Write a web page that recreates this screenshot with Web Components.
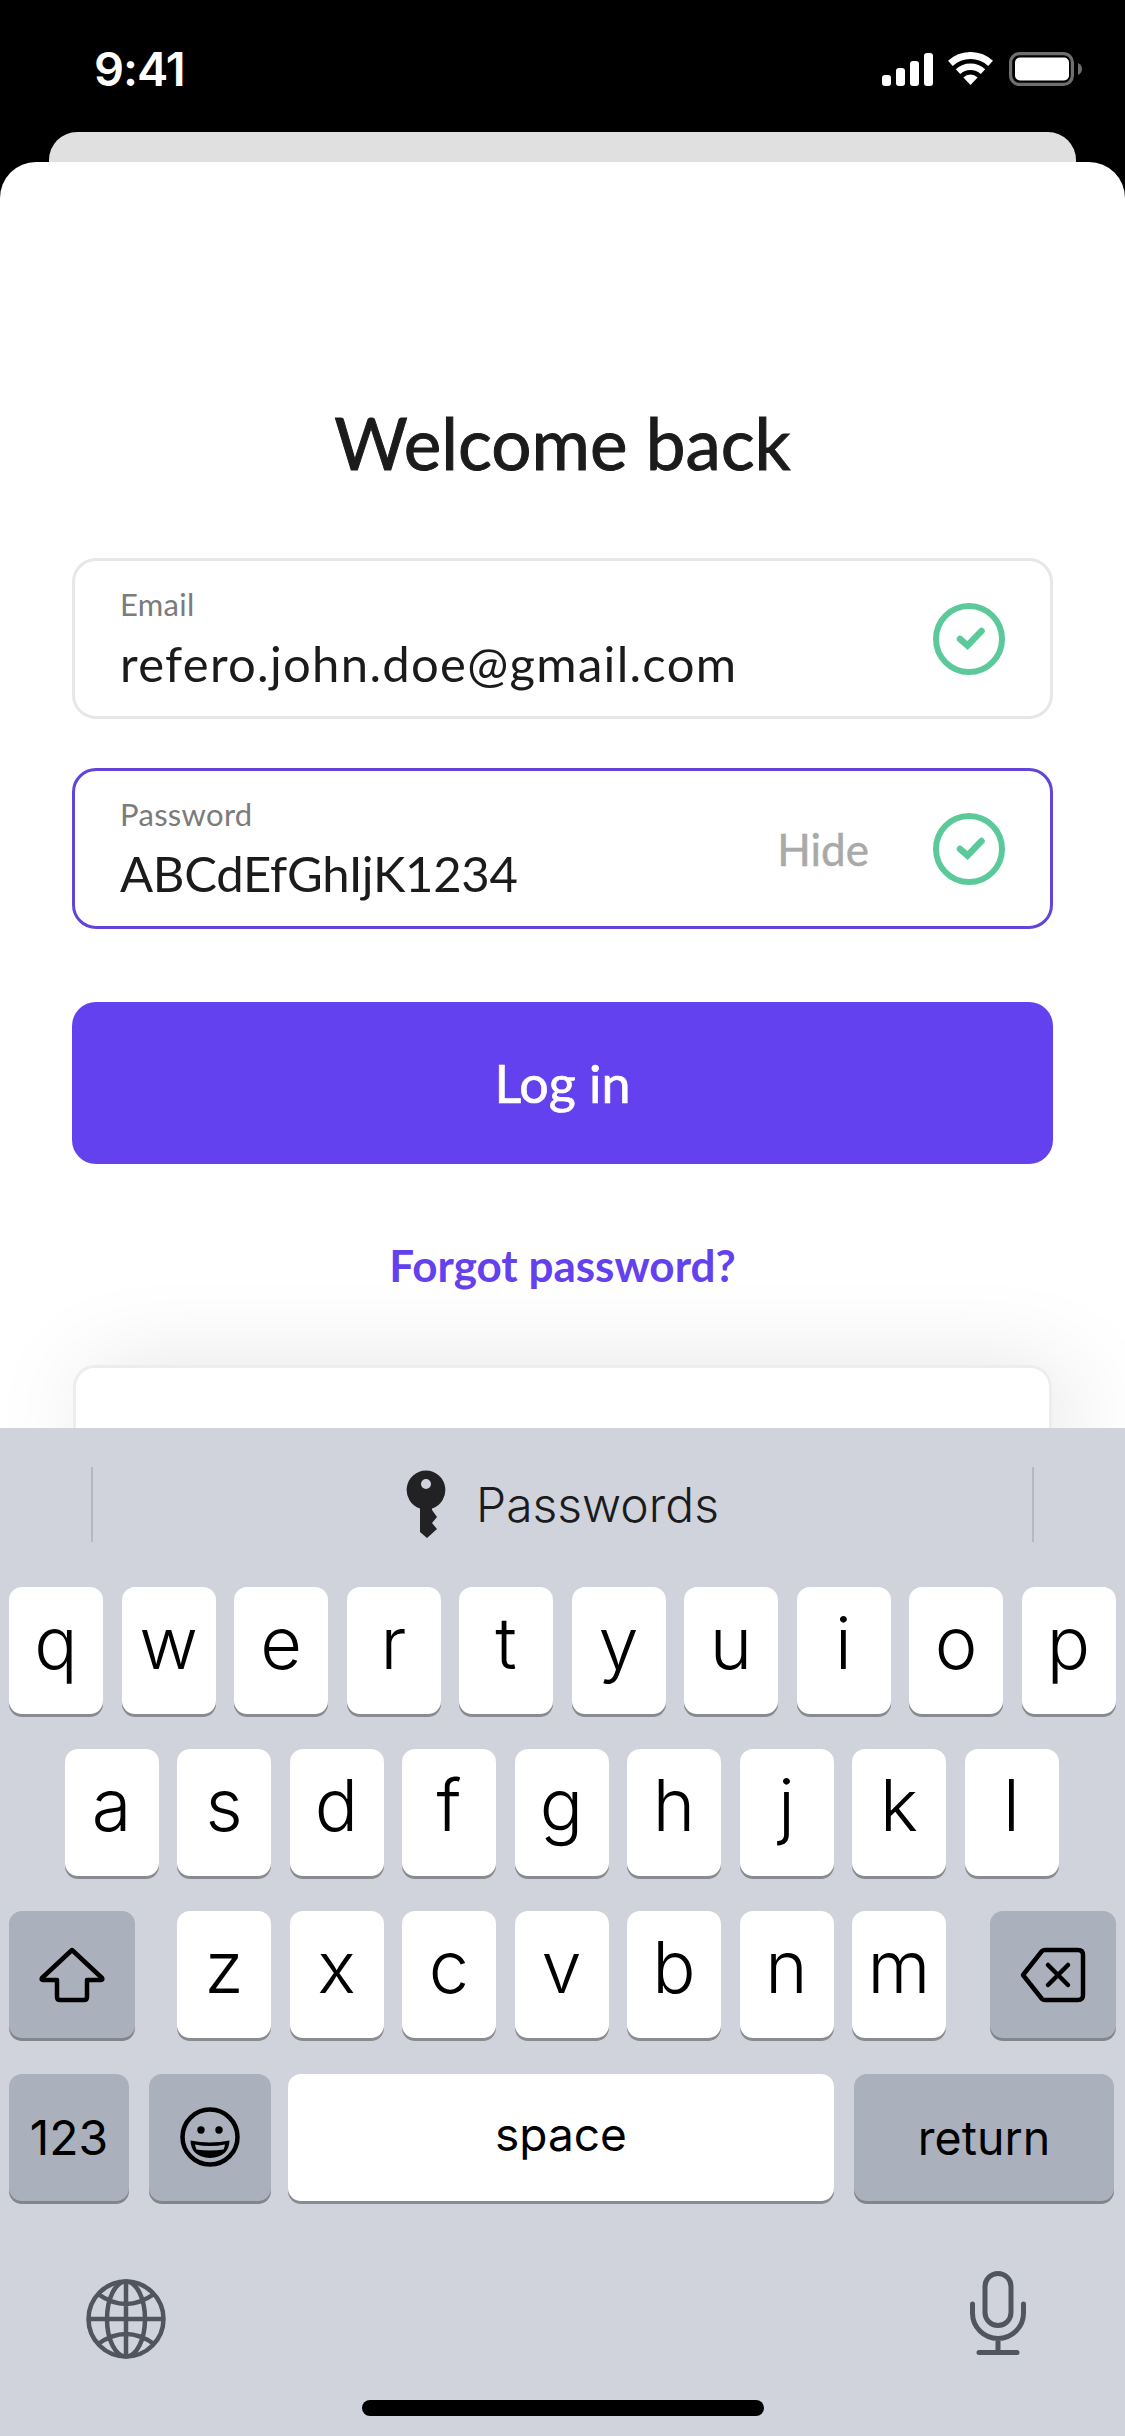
<!DOCTYPE html>
<html>
<head>
<meta charset="utf-8">
<style>
  html, body { margin: 0; padding: 0; background: #000; }
  body { width: 1125px; height: 2436px; overflow: hidden; font-family: Lato, "Noto Sans", sans-serif; }
</style>
</head>
<body>
<login-screen>
  <status-bar slot="status" time="9:41"></status-bar>
  <login-field label="Email" value="refero.john.doe@gmail.com" style="--value-spacing: 1.3px"></login-field>
  <login-field label="Password" value="ABCdEfGhIjK1234" active style="--value-spacing: -0.3px">
    <span slot="action">Hide</span>
  </login-field>
  <primary-button>Log in</primary-button>
  <soft-keyboard slot="keyboard"></soft-keyboard>
</login-screen>

<script>
class StatusBar extends HTMLElement {
  constructor() {
    super();
    this.attachShadow({ mode: 'open' });
    this.shadowRoot.innerHTML = /* html */ `
    <style>
      :host { display: flex; align-items: flex-start; justify-content: space-between; height: 132px; box-sizing: border-box; padding: 52px 43px 0 94px; background: #000; color: #fff; }
      .time { font: 600 47px/34px Inter, sans-serif; letter-spacing: -1px; }
      .icons { display: flex; align-items: flex-start; }
      svg { display: block; }
    </style>
    <div class="time"></div>
    <div class="icons">
      <svg width="51" height="33" viewBox="0 0 51 33" fill="#fff" style="margin:1px 15px 0 0">
        <rect x="0" y="22" width="9" height="11" rx="3"/>
        <rect x="14" y="15" width="9" height="18" rx="3"/>
        <rect x="28" y="8" width="9" height="25" rx="3"/>
        <rect x="42" y="0" width="9" height="33" rx="3"/>
      </svg>
      <svg width="45" height="33" viewBox="0 0 45 33" fill="none" stroke="#fff" stroke-width="7" style="margin-right:16px">
        <path d="M2.4 11.4A29.5 29.5 0 0 1 42.6 11.4"/>
        <path stroke-width="6.5" d="M10 19.6A18.3 18.3 0 0 1 35 19.6"/>
        <path d="M22.5 33L15.4 25.4A10.4 10.4 0 0 1 29.6 25.4Z" fill="#fff" stroke="none"/>
      </svg>
      <svg width="73" height="34" viewBox="0 0 73 34">
        <rect x="1.6" y="1.6" width="61.8" height="30.8" rx="9" fill="none" stroke="#6f6f6f" stroke-width="3.2"/>
        <rect x="6" y="5.5" width="54" height="23" rx="5" fill="#fff"/>
        <path d="M69 11Q73 13 73 17T69 23Z" fill="#6f6f6f"/>
      </svg>
    </div>`;
    this.shadowRoot.querySelector('.time').textContent = this.getAttribute('time');
  }
}

class LoginField extends HTMLElement {
  constructor() {
    super();
    this.attachShadow({ mode: 'open' });
    this.shadowRoot.innerHTML = /* html */ `
    <style>
      :host { display: flex; align-items: center; box-sizing: border-box; height: 161px; padding: 0 45px 0 45px; border: 3px solid #e7e7e7; border-radius: 24px; background: #fff; font-family: Lato, sans-serif; }
      :host([active]) { border-color: #6244d8; }
      .text { flex: 1; display: flex; flex-direction: column; gap: 13px; }
      .label { font-size: 31px; line-height: 36px; letter-spacing: 0.3px; color: #7b7b7b; }
      .value { font-size: 49px; line-height: 56px; color: #1b1b1b; letter-spacing: var(--value-spacing, 0); }
      ::slotted([slot="action"]) { font-size: 44px; color: #a9a9a9; margin-right: 64px; -webkit-text-stroke: 0.5px #a9a9a9; }
      svg { display: block; flex: none; }
    </style>
    <div class="text">
      <div class="label"></div>
      <div class="value"></div>
    </div>
    <slot name="action"></slot>
    <svg width="72" height="72" viewBox="0 0 72 72" fill="none" stroke="#5cc99b" stroke-width="6" stroke-linecap="round">
      <circle cx="36" cy="36" r="33"/>
      <path d="M27 36L34.5 42.5L48.5 28" stroke-width="6.5" stroke-linejoin="miter"/>
    </svg>`;
    this.shadowRoot.querySelector('.label').textContent = this.getAttribute('label');
    this.shadowRoot.querySelector('.value').textContent = this.getAttribute('value');
  }
}

class PrimaryButton extends HTMLElement {
  constructor() {
    super();
    this.attachShadow({ mode: 'open' });
    this.shadowRoot.innerHTML = /* html */ `
    <style>
      :host { display: flex; align-items: center; justify-content: center; height: 162px; border-radius: 24px; background: #6441ee; color: #fff; font: 400 52px Lato, sans-serif; -webkit-text-stroke: 0.7px #fff; }
    </style>
    <slot></slot>`;
  }
}

class KeyCap extends HTMLElement {
  constructor() {
    super();
    this.attachShadow({ mode: 'open' });
    this.shadowRoot.innerHTML = /* html */ `
    <style>
      :host { display: flex; align-items: center; justify-content: center; flex: none; box-sizing: border-box; width: 94px; height: 127px; padding-bottom: 16px; border-radius: 13px; background: #fff; box-shadow: 0 3px 0 #898b90; color: #000; font: 350 72px Inter, sans-serif; }
      :host([fn]) { background: #aab0bc; box-shadow: 0 3px 0 #82858c; }
      :host([small]) { font-size: 46.5px; font-weight: 400; padding-bottom: 0; }
      :host([icon]) { padding-bottom: 0; }
    </style>
    <slot></slot>`;
  }
}

class SoftKeyboard extends HTMLElement {
  constructor() {
    super();
    this.attachShadow({ mode: 'open' });
    const keys = (s) => s.split('').map((c) => `<key-cap>${c}</key-cap>`).join('');
    this.shadowRoot.innerHTML = /* html */ `
    <style>
      :host { display: block; height: 1008px; background: #d0d3db; position: relative; }
      .accessory { display: flex; align-items: center; justify-content: space-between; height: 159px; box-sizing: border-box; padding: 0 91px 6px; }
      .divider { width: 2px; height: 75px; background: #b4b8c1; }
      .passwords { display: flex; align-items: center; gap: 30px; font: 350 48px Inter, sans-serif; color: #1b1b1d; }
      .rows { display: flex; flex-direction: column; gap: 35px; padding: 0 9px; }
      .row { display: flex; gap: 18.5px; }
      .row.home { padding-left: 55.5px; }
      .row.third { justify-content: space-between; gap: 0; }
      .letters { display: flex; gap: 18.5px; margin-right: 2px; }
      .row.bottom { gap: 20px; margin-top: 1px; }
      .bottom-bar { display: flex; justify-content: space-between; align-items: flex-start; padding: 78px 99px 0 86px; }
      .home-bar { position: absolute; left: 362px; bottom: 20px; width: 402px; height: 16px; border-radius: 8px; background: #000; }
      svg { display: block; }
    </style>
    <div class="accessory">
      <div class="divider"></div>
      <div class="passwords">
        <svg width="40" height="70" viewBox="0 0 40 70" fill="#222224">
          <path fill-rule="evenodd" d="M20 .5A19.5 19.5 0 0 1 26 38.5V40L31 47L26 53L31 59L21 68L14 62V38.5A19.5 19.5 0 0 1 20 .5ZM20 9A5 5 0 1 0 20 19A5 5 0 1 0 20 9Z"/>
        </svg>
        <span>Passwords</span>
      </div>
      <div class="divider"></div>
    </div>
    <div class="rows">
      <div class="row">${keys('qwertyuiop')}</div>
      <div class="row home">${keys('asdfghjkl')}</div>
      <div class="row third">
        <key-cap fn icon style="width:126px">
          <svg width="66" height="56" viewBox="0 0 66 56" fill="none" stroke="#000" stroke-width="4.5" stroke-linejoin="round">
            <path d="M33 3L3 31Q2 33 4 33H18V50Q18 53 21 53H45Q48 53 48 50V33H62Q64 33 63 31Z"/>
          </svg>
        </key-cap>
        <div class="letters">${keys('zxcvbnm')}</div>
        <key-cap fn icon style="width:126px">
          <svg width="66" height="56" viewBox="0 0 66 56" fill="none" stroke="#000" stroke-width="4.5" stroke-linejoin="round" stroke-linecap="round">
            <path d="M3 28L22 4Q23 3 25 3H58Q63 3 63 8V48Q63 53 58 53H25Q23 53 22 52Z"/>
            <path d="M28 18L48 38M48 18L28 38"/>
          </svg>
        </key-cap>
      </div>
      <div class="row bottom">
        <key-cap fn small style="width:120px;font-size:48px">123</key-cap>
        <key-cap fn icon style="width:122px;padding-bottom:1px">
          <svg width="60" height="60" viewBox="0 0 60 60">
            <circle cx="30" cy="30" r="27.5" fill="none" stroke="#000" stroke-width="4.5"/>
            <circle cx="21" cy="23" r="3.7"/>
            <circle cx="39" cy="23" r="3.7"/>
            <path d="M10.5 33.5Q30 37.5 49.5 33.5Q49 50 30 51Q11 50 10.5 33.5Z"/>
            <path d="M15 37.5Q30 40.5 45 37.5Q44.5 40.5 43.5 42.5Q30 44.5 16.5 42.5Q15.5 40.5 15 37.5Z" fill="#aab0bc"/>
          </svg>
        </key-cap>
        <key-cap small style="width:546px;margin-left:-3px;padding-bottom:8px;font-size:46px">space</key-cap>
        <key-cap fn small style="width:260px">return</key-cap>
      </div>
    </div>
    <div class="bottom-bar">
      <svg width="80" height="80" viewBox="0 0 80 80" fill="none" stroke="#50555f" stroke-width="4.5">
        <circle cx="40" cy="40" r="37.5"/>
        <ellipse cx="40" cy="40" rx="19" ry="37.5"/>
        <path d="M40 2V78M2 40H78M12 15Q40 35 68 15M12 65Q40 45 68 65"/>
      </svg>
      <svg width="56" height="84" viewBox="0 0 56 84" fill="none" stroke="#50555f" stroke-width="5" stroke-linecap="round" style="margin-top:-8px">
        <rect x="15" y="2.5" width="26" height="52" rx="13"/>
        <path d="M2.5 33V42A25.5 25.5 0 0 0 53.5 42V33M28 68V82M9 81.5H47"/>
      </svg>
    </div>
    <div class="home-bar"></div>`;
  }
}

class LoginScreen extends HTMLElement {
  constructor() {
    super();
    this.attachShadow({ mode: 'open' });
    this.shadowRoot.innerHTML = /* html */ `
    <style>
      :host { display: block; width: 1125px; height: 2436px; overflow: hidden; background: #000; }
      .back { height: 30px; margin: 0 49px; border-radius: 28px 28px 0 0; background: #e0e0e0; }
      .sheet { height: 1266px; box-sizing: border-box; overflow: hidden; padding: 0 72px; border-radius: 36px 36px 0 0; background: #fff; }
      h1 { margin: 0; padding-top: 239px; padding-bottom: 3px; text-align: center; font: 400 71px/84px Lato, sans-serif; -webkit-text-stroke: 1px #1b1b1b; color: #1b1b1b; }
      .form { display: flex; flex-direction: column; gap: 49px; margin-top: 70px; }
      .form ::slotted(primary-button) { margin-top: 24px; }
      .forgot { margin-top: 75px; text-align: center; font: 700 44px/52px Lato, sans-serif; color: #6441ee; }
      .next { height: 80px; margin: 74px 1px 0; border: 3px solid #ededed; border-bottom: 0; border-radius: 22px 22px 0 0; background: #fff; box-shadow: 15px 10px 100px rgba(0, 0, 0, 0.13); }
    </style>
    <slot name="status"></slot>
    <div class="back"></div>
    <div class="sheet">
      <h1>Welcome back</h1>
      <div class="form"><slot></slot></div>
      <div class="forgot">Forgot password?</div>
      <div class="next"></div>
    </div>
    <slot name="keyboard"></slot>`;
  }
}

customElements.define('status-bar', StatusBar);
customElements.define('login-field', LoginField);
customElements.define('primary-button', PrimaryButton);
customElements.define('key-cap', KeyCap);
customElements.define('soft-keyboard', SoftKeyboard);
customElements.define('login-screen', LoginScreen);
</script>
</body>
</html>
